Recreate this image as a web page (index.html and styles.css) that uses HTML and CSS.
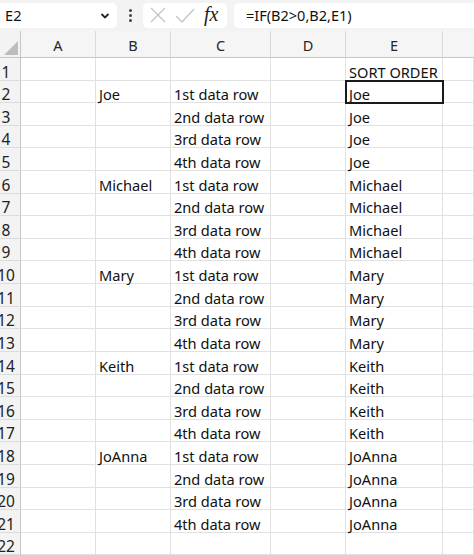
FILE: index.html
```html
<!DOCTYPE html>
<html>
<head>
<meta charset="utf-8">
<link rel="stylesheet" href="styles.css">
</head>
<body>
<div class="toolbar">
  <div class="namebox"><span class="ref">E2</span>
    <svg class="chev" width="10" height="8" viewBox="0 0 10 8"><path d="M1.5 2 L5 5.5 L8.5 2" fill="none" stroke="#222" stroke-width="1.8"/></svg>
  </div>
  <div class="dots"><span></span><span></span><span></span></div>
  <div class="fxbox">
    <svg width="18" height="18" viewBox="0 0 18 18"><path d="M2 2 L16 16 M16 2 L2 16" stroke="#c4c4c4" stroke-width="1.3" fill="none"/></svg>
    <svg width="20" height="18" viewBox="0 0 20 18"><path d="M1 10 L7 16 L19 3" stroke="#c4c4c4" stroke-width="1.3" fill="none"/></svg>
    <span class="fx">fx</span>
  </div>
  <div class="formula">=IF(B2&gt;0,B2,E1)</div>
</div>
<div class="grid">
  <div class="corner"><svg width="14" height="14" viewBox="0 0 14 14"><path d="M14 0 L14 14 L0 14 Z" fill="#bdbdbd"/></svg></div>
  <div class="ch">A</div><div class="ch">B</div><div class="ch">C</div><div class="ch">D</div><div class="ch">E</div><div class="ch last"></div>

  <div class="rh">1</div><div class="c"></div><div class="c"></div><div class="c"></div><div class="c"></div><div class="c">SORT ORDER</div><div class="c"></div>
  <div class="rh">2</div><div class="c"></div><div class="c">Joe</div><div class="c">1st data row</div><div class="c"></div><div class="c sel">Joe</div><div class="c"></div>
  <div class="rh">3</div><div class="c"></div><div class="c"></div><div class="c">2nd data row</div><div class="c"></div><div class="c">Joe</div><div class="c"></div>
  <div class="rh">4</div><div class="c"></div><div class="c"></div><div class="c">3rd data row</div><div class="c"></div><div class="c">Joe</div><div class="c"></div>
  <div class="rh">5</div><div class="c"></div><div class="c"></div><div class="c">4th data row</div><div class="c"></div><div class="c">Joe</div><div class="c"></div>
  <div class="rh">6</div><div class="c"></div><div class="c">Michael</div><div class="c">1st data row</div><div class="c"></div><div class="c">Michael</div><div class="c"></div>
  <div class="rh">7</div><div class="c"></div><div class="c"></div><div class="c">2nd data row</div><div class="c"></div><div class="c">Michael</div><div class="c"></div>
  <div class="rh">8</div><div class="c"></div><div class="c"></div><div class="c">3rd data row</div><div class="c"></div><div class="c">Michael</div><div class="c"></div>
  <div class="rh">9</div><div class="c"></div><div class="c"></div><div class="c">4th data row</div><div class="c"></div><div class="c">Michael</div><div class="c"></div>
  <div class="rh">10</div><div class="c"></div><div class="c">Mary</div><div class="c">1st data row</div><div class="c"></div><div class="c">Mary</div><div class="c"></div>
  <div class="rh">11</div><div class="c"></div><div class="c"></div><div class="c">2nd data row</div><div class="c"></div><div class="c">Mary</div><div class="c"></div>
  <div class="rh">12</div><div class="c"></div><div class="c"></div><div class="c">3rd data row</div><div class="c"></div><div class="c">Mary</div><div class="c"></div>
  <div class="rh">13</div><div class="c"></div><div class="c"></div><div class="c">4th data row</div><div class="c"></div><div class="c">Mary</div><div class="c"></div>
  <div class="rh">14</div><div class="c"></div><div class="c">Keith</div><div class="c">1st data row</div><div class="c"></div><div class="c">Keith</div><div class="c"></div>
  <div class="rh">15</div><div class="c"></div><div class="c"></div><div class="c">2nd data row</div><div class="c"></div><div class="c">Keith</div><div class="c"></div>
  <div class="rh">16</div><div class="c"></div><div class="c"></div><div class="c">3rd data row</div><div class="c"></div><div class="c">Keith</div><div class="c"></div>
  <div class="rh">17</div><div class="c"></div><div class="c"></div><div class="c">4th data row</div><div class="c"></div><div class="c">Keith</div><div class="c"></div>
  <div class="rh">18</div><div class="c"></div><div class="c">JoAnna</div><div class="c">1st data row</div><div class="c"></div><div class="c">JoAnna</div><div class="c"></div>
  <div class="rh">19</div><div class="c"></div><div class="c"></div><div class="c">2nd data row</div><div class="c"></div><div class="c">JoAnna</div><div class="c"></div>
  <div class="rh">20</div><div class="c"></div><div class="c"></div><div class="c">3rd data row</div><div class="c"></div><div class="c">JoAnna</div><div class="c"></div>
  <div class="rh">21</div><div class="c"></div><div class="c"></div><div class="c">4th data row</div><div class="c"></div><div class="c">JoAnna</div><div class="c"></div>
  <div class="rh">22</div><div class="c"></div><div class="c"></div><div class="c"></div><div class="c"></div><div class="c"></div><div class="c"></div>
</div>
</body>
</html>
```
FILE: styles.css
```css
html, body {
  margin: 0;
  padding: 0;
  background: #ffffff;
  overflow: hidden;
  width: 474px;
  height: 555px;
}
body {
  font-family: "Noto Sans", "Liberation Sans", sans-serif;
  color: #111;
}
.toolbar {
  height: 31px;
  background: #f3f3f3;
  display: flex;
  align-items: center;
  box-sizing: border-box;
  padding: 2px 0 3px 0;
}
.namebox {
  width: 117px;
  height: 25px;
  background: #fff;
  border-radius: 0 5px 5px 0;
  box-sizing: border-box;
  display: flex;
  align-items: center;
  justify-content: space-between;
  padding: 0 7px 0 5px;
  font-size: 14.5px;
}
.namebox .ref { letter-spacing: 0.2px; }
.chev { margin-top: 1px; }
.dots {
  width: 26px;
  display: flex;
  flex-direction: column;
  align-items: center;
  gap: 2px;
}
.dots span {
  width: 3px;
  height: 3px;
  border-radius: 50%;
  background: #444;
}
.fxbox {
  width: 84px;
  height: 25px;
  background: #fff;
  border-radius: 5px;
  display: flex;
  align-items: center;
  box-sizing: border-box;
  padding: 0 4px 0 6px;
  gap: 8px;
}
.fx {
  font-family: "Liberation Serif", "DejaVu Serif", serif;
  font-style: italic;
  font-size: 20px;
  color: #222;
  margin-left: 1px;
  line-height: 1;
  margin-top: -3px;
}
.formula {
  flex: 1;
  margin-left: 7px;
  height: 25px;
  background: #fff;
  border-radius: 5px 0 0 5px;
  display: flex;
  align-items: center;
  padding-left: 12px;
  font-size: 14.5px;
}
.grid {
  display: grid;
  grid-template-columns: 21px 75px 75px 100px 75px 97px 1fr;
  grid-template-rows: 27px repeat(22, 22.62px);
  font-size: 14.6px;
}
.corner {
  background: #f3f3f3;
  border-right: 1px solid #c6c6c6;
  border-bottom: 1px solid #c6c6c6;
  display: flex;
  align-items: flex-end;
  justify-content: flex-end;
  padding: 0 2px 2px 0;
}
.ch {
  background: #f5f5f5;
  border-right: 1px solid #dadada;
  border-bottom: 1px solid #c6c6c6;
  display: flex;
  align-items: center;
  justify-content: center;
  color: #262626;
  font-size: 14.5px;
  padding-top: 2px;
}
.ch.last { border-right: none; }
.rh {
  background: #f3f3f3;
  border-right: 1px solid #c6c6c6;
  border-bottom: 1px solid #dcdcdc;
  box-sizing: border-box;
  padding-right: 8px;
  text-align: center;
  display: flex;
  align-items: flex-end;
  justify-content: center;
  font-size: 15.5px;
  color: #222;
  line-height: 16px;
  padding-bottom: 0;
  white-space: nowrap;
}
.c {
  border-right: 1px solid #e1e1e1;
  border-bottom: 1px solid #e1e1e1;
  box-sizing: border-box;
  padding-left: 3px;
  padding-bottom: 0;
  display: flex;
  align-items: flex-end;
  line-height: 16px;
  white-space: nowrap;
  color: #111;
}
.c.sel {
  outline: 2px solid #1a1a1a;
  outline-offset: -1px;
  position: relative;
  z-index: 1;
}
```
